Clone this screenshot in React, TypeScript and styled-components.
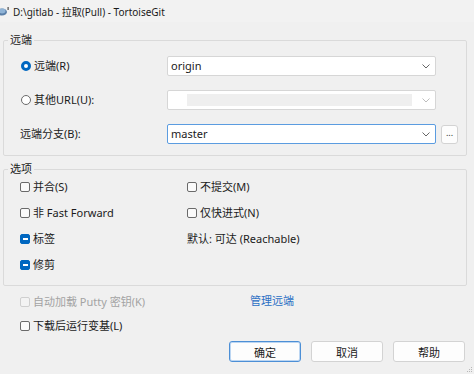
import React from 'react';
import styled, { createGlobalStyle } from 'styled-components';

const GlobalStyle = createGlobalStyle`
  html, body {
    margin: 0;
    padding: 0;
    background: #f0f0f0;
  }
  body {
    font-family: "Noto Sans", "Noto Sans CJK SC", sans-serif;
    font-size: 11px;
    color: #1b1b1b;
  }
`;

const FONT = `"Noto Sans", "Noto Sans CJK SC", sans-serif`;
const ACCENT = '#0067c0';

const Window = styled.div`
  position: relative;
  width: 474px;
  height: 374px;
  background: #f0f0f0;
  display: flex;
  flex-direction: column;
  overflow: hidden;
  font-family: ${FONT};
  font-size: 11px;
`;

const TitleBar = styled.div`
  height: 22px;
  display: flex;
  align-items: center;
  gap: 3px;
  background: #f2f2f2;
  font-size: 10px;
  color: #1a1a1a;
`;

const Body = styled.div`
  display: flex;
  flex-direction: column;
  padding: 11px 7px 0 3px;
`;

const GroupBox = styled.fieldset<{ $gap?: number }>`
  margin: 0 0 ${(p) => p.$gap ?? 0}px 0;
  padding: 0;
  min-width: 0;
  border: 1px solid #dadada;
  border-radius: 2px;
`;

const Legend = styled.legend`
  margin-left: 4px;
  padding: 0 2px;
  line-height: 14px;
  height: 14px;
`;

const RemoteGrid = styled.div`
  display: grid;
  grid-template-columns: 142px 269px 17px;
  column-gap: 5px;
  row-gap: 14px;
  align-items: center;
  padding: 9px 0 11px 16px;
`;

const OptionGrid = styled.div`
  display: grid;
  grid-template-columns: 167px auto;
  row-gap: 12px;
  padding: 4px 0 13px 16px;
`;

const Choice = styled.label<{ $disabled?: boolean }>`
  display: flex;
  align-items: center;
  gap: 3px;
  height: 14px;
  line-height: 14px;
  white-space: nowrap;
  color: ${(p) => (p.$disabled ? '#a3a3a3' : '#1b1b1b')};
`;

const Radio = styled.span<{ $on?: boolean }>`
  box-sizing: border-box;
  width: 10px;
  height: 10px;
  border-radius: 50%;
  margin-left: 1px;
  border: ${(p) => (p.$on ? `3px solid ${ACCENT}` : '1px solid #6a6a6a')};
  background: #fff;
`;

const Box = styled.span<{ $state?: 'off' | 'mixed'; $disabled?: boolean }>`
  box-sizing: border-box;
  width: 10px;
  height: 10px;
  border-radius: 2px;
  display: flex;
  align-items: center;
  justify-content: center;
  border: 1px solid
    ${(p) => (p.$state === 'mixed' ? ACCENT : p.$disabled ? '#cfcfcf' : '#6a6a6a')};
  background: ${(p) => (p.$state === 'mixed' ? ACCENT : p.$disabled ? '#f3f3f3' : '#fafafa')};

  &::after {
    content: '';
    display: ${(p) => (p.$state === 'mixed' ? 'block' : 'none')};
    width: 5px;
    height: 1.5px;
    background: #fff;
  }
`;

const Combo = styled.div<{ $focus?: boolean; $disabled?: boolean }>`
  box-sizing: border-box;
  height: 20px;
  display: flex;
  align-items: center;
  padding: 0 5px 0 3px;
  background: #fff;
  border: 1px solid ${(p) => (p.$focus ? '#5b9ce0' : '#d6d6d6')};
  border-radius: 2px;
  color: ${(p) => (p.$disabled ? '#a0a0a0' : '#1b1b1b')};
`;

const ComboText = styled.span`
  flex: 1;
  line-height: 14px;
`;

const DisabledField = styled.span`
  flex: 1;
  align-self: stretch;
  margin: 3px 10px 3px 16px;
  background: #efefef;
`;

const EllipsisButton = styled.button`
  box-sizing: border-box;
  width: 17px;
  height: 19px;
  padding: 0 0 4px;
  border: 1px solid #d3d3d3;
  border-radius: 3px;
  background: #fdfdfd;
  font-family: ${FONT};
  font-size: 9px;
  color: #333;
  line-height: 1;
`;

const Status = styled.span`
  line-height: 14px;
  white-space: nowrap;
`;

const Footer = styled.div`
  display: grid;
  grid-template-columns: 230px auto;
  row-gap: 10px;
  padding: 9px 0 0 17px;
`;

const Link = styled.a`
  color: #2b6fc4;
  line-height: 12px;
  cursor: pointer;
`;

const ButtonRow = styled.div`
  display: flex;
  justify-content: flex-end;
  gap: 10px;
  padding-top: 8px;
  padding-right: 2px;
`;

const DialogButton = styled.button<{ $default?: boolean }>`
  box-sizing: border-box;
  width: 72px;
  height: 21px;
  border-radius: 3px;
  background: #fdfdfd;
  border: 1px solid ${(p) => (p.$default ? '#4c8fd6' : '#d3d3d3')};
  box-shadow: ${(p) => (p.$default ? 'inset 0 0 0 1px #bcd6f2' : 'none')};
  font-family: ${FONT};
  font-size: 11px;
  color: #1b1b1b;
  padding: 0;
`;

const Grip = styled.svg`
  position: absolute;
  right: 1px;
  bottom: 1px;
`;

const Chevron = ({ color = '#666' }: { color?: string }) => (
  <svg width="8" height="5" viewBox="0 0 8 5">
    <path d="M0.5 0.5 L4 4 L7.5 0.5" fill="none" stroke={color} strokeWidth="1" />
  </svg>
);

const AppIcon = () => (
  <svg width="14" height="14" viewBox="0 0 14 14" style={{ marginLeft: -4 }}>
    <ellipse cx="6" cy="8" rx="5" ry="3.5" fill="#5a7fa8" />
    <ellipse cx="6" cy="7" rx="3.5" ry="2.4" fill="#8fb3d6" />
    <rect x="11.5" y="3" width="1.2" height="3" fill="#4a4a4a" />
  </svg>
);

type Opt = { label: string; state?: 'off' | 'mixed' };

const leftOptions: Opt[] = [
  { label: '并合(S)' },
  { label: '非 Fast Forward' },
  { label: '标签', state: 'mixed' },
  { label: '修剪', state: 'mixed' },
];

const App: React.FC = () => {
  return (
    <>
      <GlobalStyle />
      <Window>
        <TitleBar>
          <AppIcon />
          <span>D:\gitlab - 拉取(Pull) - TortoiseGit</span>
        </TitleBar>
        <Body>
          <GroupBox $gap={6}>
            <Legend>远端</Legend>
            <RemoteGrid>
              <Choice>
                <Radio $on />
                远端(R)
              </Choice>
              <Combo>
                <ComboText>origin</ComboText>
                <Chevron />
              </Combo>
              <span />

              <Choice>
                <Radio />
                其他URL(U):
              </Choice>
              <Combo $disabled>
                <DisabledField />
                <Chevron color="#bdbdbd" />
              </Combo>
              <span />

              <Choice>远端分支(B):</Choice>
              <Combo $focus>
                <ComboText>master</ComboText>
                <Chevron />
              </Combo>
              <EllipsisButton>...</EllipsisButton>
            </RemoteGrid>
          </GroupBox>

          <GroupBox>
            <Legend>选项</Legend>
            <OptionGrid>
              <Choice>
                <Box />
                {leftOptions[0].label}
              </Choice>
              <Choice>
                <Box />
                不提交(M)
              </Choice>
              <Choice>
                <Box />
                {leftOptions[1].label}
              </Choice>
              <Choice>
                <Box />
                仅快进式(N)
              </Choice>
              <Choice>
                <Box $state="mixed" />
                {leftOptions[2].label}
              </Choice>
              <Status>默认: 可达 (Reachable)</Status>
              <Choice>
                <Box $state="mixed" />
                {leftOptions[3].label}
              </Choice>
              <span />
            </OptionGrid>
          </GroupBox>

          <Footer>
            <Choice $disabled>
              <Box $disabled />
              自动加载 Putty 密钥(K)
            </Choice>
            <Link>管理远端</Link>
            <Choice>
              <Box />
              下载后运行变基(L)
            </Choice>
            <span />
          </Footer>

          <ButtonRow>
            <DialogButton $default>确定</DialogButton>
            <DialogButton>取消</DialogButton>
            <DialogButton>帮助</DialogButton>
          </ButtonRow>
        </Body>
        <Grip width="6" height="6" viewBox="0 0 6 6">
          <rect x="4" y="0" width="1" height="1" fill="#b8b8b8" />
          <rect x="2" y="2" width="1" height="1" fill="#b8b8b8" />
          <rect x="4" y="2" width="1" height="1" fill="#b8b8b8" />
          <rect x="0" y="4" width="1" height="1" fill="#b8b8b8" />
          <rect x="2" y="4" width="1" height="1" fill="#b8b8b8" />
          <rect x="4" y="4" width="1" height="1" fill="#b8b8b8" />
        </Grip>
      </Window>
    </>
  );
};

export default App;
